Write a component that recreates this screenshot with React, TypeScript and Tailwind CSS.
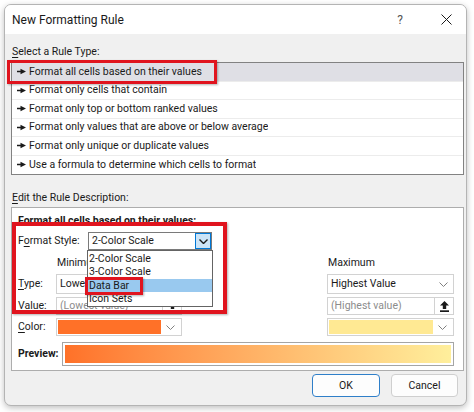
import React from "react";

const RULES = [
  "Format all cells based on their values",
  "Format only cells that contain",
  "Format only top or bottom ranked values",
  "Format only values that are above or below average",
  "Format only unique or duplicate values",
  "Use a formula to determine which cells to format",
];

const STYLES = ["2-Color Scale", "3-Color Scale", "Data Bar", "Icon Sets"];

function Pointer() {
  return (
    <svg width="9" height="7" viewBox="0 0 9 7" className="shrink-0">
      <polygon points="0,2.7 3.5,2.7 3.5,0.7 9,3.5 3.5,6.3 3.5,4.3 0,4.3" fill="#1a1a1a" />
    </svg>
  );
}

function Chevron({ dark = false }: { dark?: boolean }) {
  return (
    <svg width="9" height="5" viewBox="0 0 9 5">
      <polyline
        points="0.5,0.5 4.5,4.5 8.5,0.5"
        fill="none"
        stroke={dark ? "#1a1a1a" : "#808080"}
        strokeWidth={dark ? 1.4 : 1}
      />
    </svg>
  );
}

function UploadIcon() {
  return (
    <svg width="9" height="11" viewBox="0 0 9 11">
      <polygon points="4.5,0 9,4.5 6.2,4.5 6.2,8 2.8,8 2.8,4.5 0,4.5" fill="#1a1a1a" />
      <rect x="0" y="9.3" width="9" height="1.7" fill="#1a1a1a" />
    </svg>
  );
}

function Underlined({ first, rest }: { first: string; rest: string }) {
  return (
    <span>
      <span className="underline underline-offset-2">{first}</span>
      {rest}
    </span>
  );
}

function SelectBox({ value }: { value: string }) {
  return (
    <div className="flex h-[20px] items-center border border-[#d2d2d2] bg-white">
      <span className="flex-1 truncate pl-[3px]">{value}</span>
      <span className="flex h-full w-[19px] items-center justify-center">
        <Chevron />
      </span>
    </div>
  );
}

function ValueBox({ placeholder }: { placeholder: string }) {
  return (
    <div className="flex h-[18px] items-center border border-[#d2d2d2] bg-white">
      <span className="flex-1 truncate pl-[3px] text-[#8c8c8c]">{placeholder}</span>
      <span className="flex h-full w-[19px] items-center justify-center border-l border-[#d2d2d2]">
        <UploadIcon />
      </span>
    </div>
  );
}

function ColorBox({ color }: { color: string }) {
  return (
    <div className="flex h-[18px] items-center border border-[#d2d2d2] bg-white p-[1px]">
      <span className="h-full flex-1" style={{ background: color }} />
      <span className="flex h-full w-[19px] items-center justify-center">
        <Chevron />
      </span>
    </div>
  );
}

export default function App() {
  return (
    <div className="relative h-[412px] w-[474px] overflow-hidden bg-white pl-[4px] pt-[4px] font-['Roboto',sans-serif] text-[10.5px] leading-[16px] text-[#1a1a1a]">
      <div className="flex h-[402px] w-[463px] flex-col overflow-hidden rounded-[7px] border border-[#b4b4b4] bg-[#f0f0f0] shadow-[0_2px_6px_rgba(0,0,0,0.25)]">
        {/* Title bar */}
        <div className="flex h-[29px] shrink-0 items-center bg-white pl-[7px] pr-[14px]">
          <span className="flex-1 text-[12px] leading-[20px]">New Formatting Rule</span>
          <span className="text-[12px] text-[#555]">?</span>
          <svg width="11" height="11" viewBox="0 0 11 11" className="ml-[38px]">
            <path d="M0.5 0.5 L10.5 10.5 M10.5 0.5 L0.5 10.5" stroke="#1a1a1a" strokeWidth="1" />
          </svg>
        </div>

        <div className="flex flex-1 flex-col pl-[6px] pr-[2px]">
          <div className="mt-[10px] h-[16px] pl-[1px]">
            <Underlined first="S" rest="elect a Rule Type:" />
          </div>

          {/* Rule list */}
          <div className="mt-[2px] flex flex-col border border-[#828282] bg-white">
            {RULES.map((rule, i) => (
              <div
                key={rule}
                className={`flex h-[18.5px] items-center gap-[3px] pl-[5px] ${
                  i === 0 ? "bg-[#dfdfe5]" : ""
                } ${i < RULES.length - 1 ? "border-b border-[#ececec]" : ""}`}
              >
                <Pointer />
                <span className="truncate">{rule}</span>
              </div>
            ))}
          </div>

          <div className="mt-[15px] h-[16px] pl-[1px]">
            <Underlined first="E" rest="dit the Rule Description:" />
          </div>

          {/* Description panel */}
          <div className="mt-[1px] flex h-[164px] flex-col border border-[#adadad] bg-white pl-[6px] pr-[9px]">
            <div className="mt-[5px] h-[16px] font-bold">Format all cells based on their values:</div>

            <div className="mt-[3px] flex h-[18px] items-center">
              <span className="w-[70px]">
                F<span className="underline underline-offset-2">o</span>rmat Style:
              </span>
              <div className="flex h-[18px] w-[124px] items-center border border-[#7a7a7a] bg-white">
                <span className="flex-1 pl-[3px]">2-Color Scale</span>
                <span className="flex h-full w-[16px] items-center justify-center border border-[#0078d7] bg-[#cce4f7]">
                  <Chevron dark />
                </span>
              </div>
            </div>

            <div className="grid grid-cols-[38px_126px_1fr_127px] gap-y-[3px]">
              <span />
              <span className="mt-[5px] h-[16px] pl-[1px]">Minimum</span>
              <span />
              <span className="mt-[5px] h-[16px] pl-[1px]">Maximum</span>

              <span className="flex items-center">
                <Underlined first="T" rest="ype:" />
              </span>
              <SelectBox value="Lowest Value" />
              <span />
              <SelectBox value="Highest Value" />

              <span className="flex items-center">
                <Underlined first="V" rest="alue:" />
              </span>
              <ValueBox placeholder="(Lowest value)" />
              <span />
              <ValueBox placeholder="(Highest value)" />

              <span className="flex items-center">
                <Underlined first="C" rest="olor:" />
              </span>
              <ColorBox color="#ff7128" />
              <span />
              <ColorBox color="#ffe993" />
            </div>

            <div className="mt-[6px] flex h-[24px] items-center">
              <span className="w-[44px] font-bold">Preview:</span>
              <div className="h-full flex-1 border border-[#a5a5a5] p-[2px]">
                <div className="h-full w-full bg-gradient-to-r from-[#ff7128] to-[#ffef9c]" />
              </div>
            </div>
          </div>

          {/* Buttons */}
          <div className="mt-[3px] flex justify-end gap-[11px] pr-[6px]">
            <button className="h-[23px] w-[68px] rounded-[4px] border-[1.5px] border-[#2f7fc9] bg-[#fdfdfd]">
              OK
            </button>
            <button className="h-[23px] w-[67px] rounded-[4px] border border-[#cfcfcf] bg-[#fdfdfd]">
              Cancel
            </button>
          </div>
        </div>
      </div>

      {/* Open dropdown for Format Style */}
      <div className="absolute left-[87px] top-[250px] flex w-[126px] flex-col border border-[#646464] bg-white py-[1px]">
        {STYLES.map((s) => (
          <div
            key={s}
            className={`h-[13.25px] pl-[1px] leading-[13px] ${s === "Data Bar" ? "bg-[#99c9ef]" : ""}`}
          >
            {s}
          </div>
        ))}
      </div>

      {/* Annotation boxes */}
      <div className="pointer-events-none absolute left-[7px] top-[60px] h-[24px] w-[210px] border-[3px] border-[#e0141e] shadow-[1px_1px_2px_rgba(0,0,0,0.3)]" />
      <div className="pointer-events-none absolute left-[12px] top-[222px] h-[92px] w-[215px] border-[4px] border-[#e0141e] shadow-[1px_1px_2px_rgba(0,0,0,0.3)]" />
      <div className="pointer-events-none absolute left-[85px] top-[277px] h-[18px] w-[58px] border-[3px] border-[#e0141e] shadow-[1px_1px_2px_rgba(0,0,0,0.3)]" />
    </div>
  );
}
